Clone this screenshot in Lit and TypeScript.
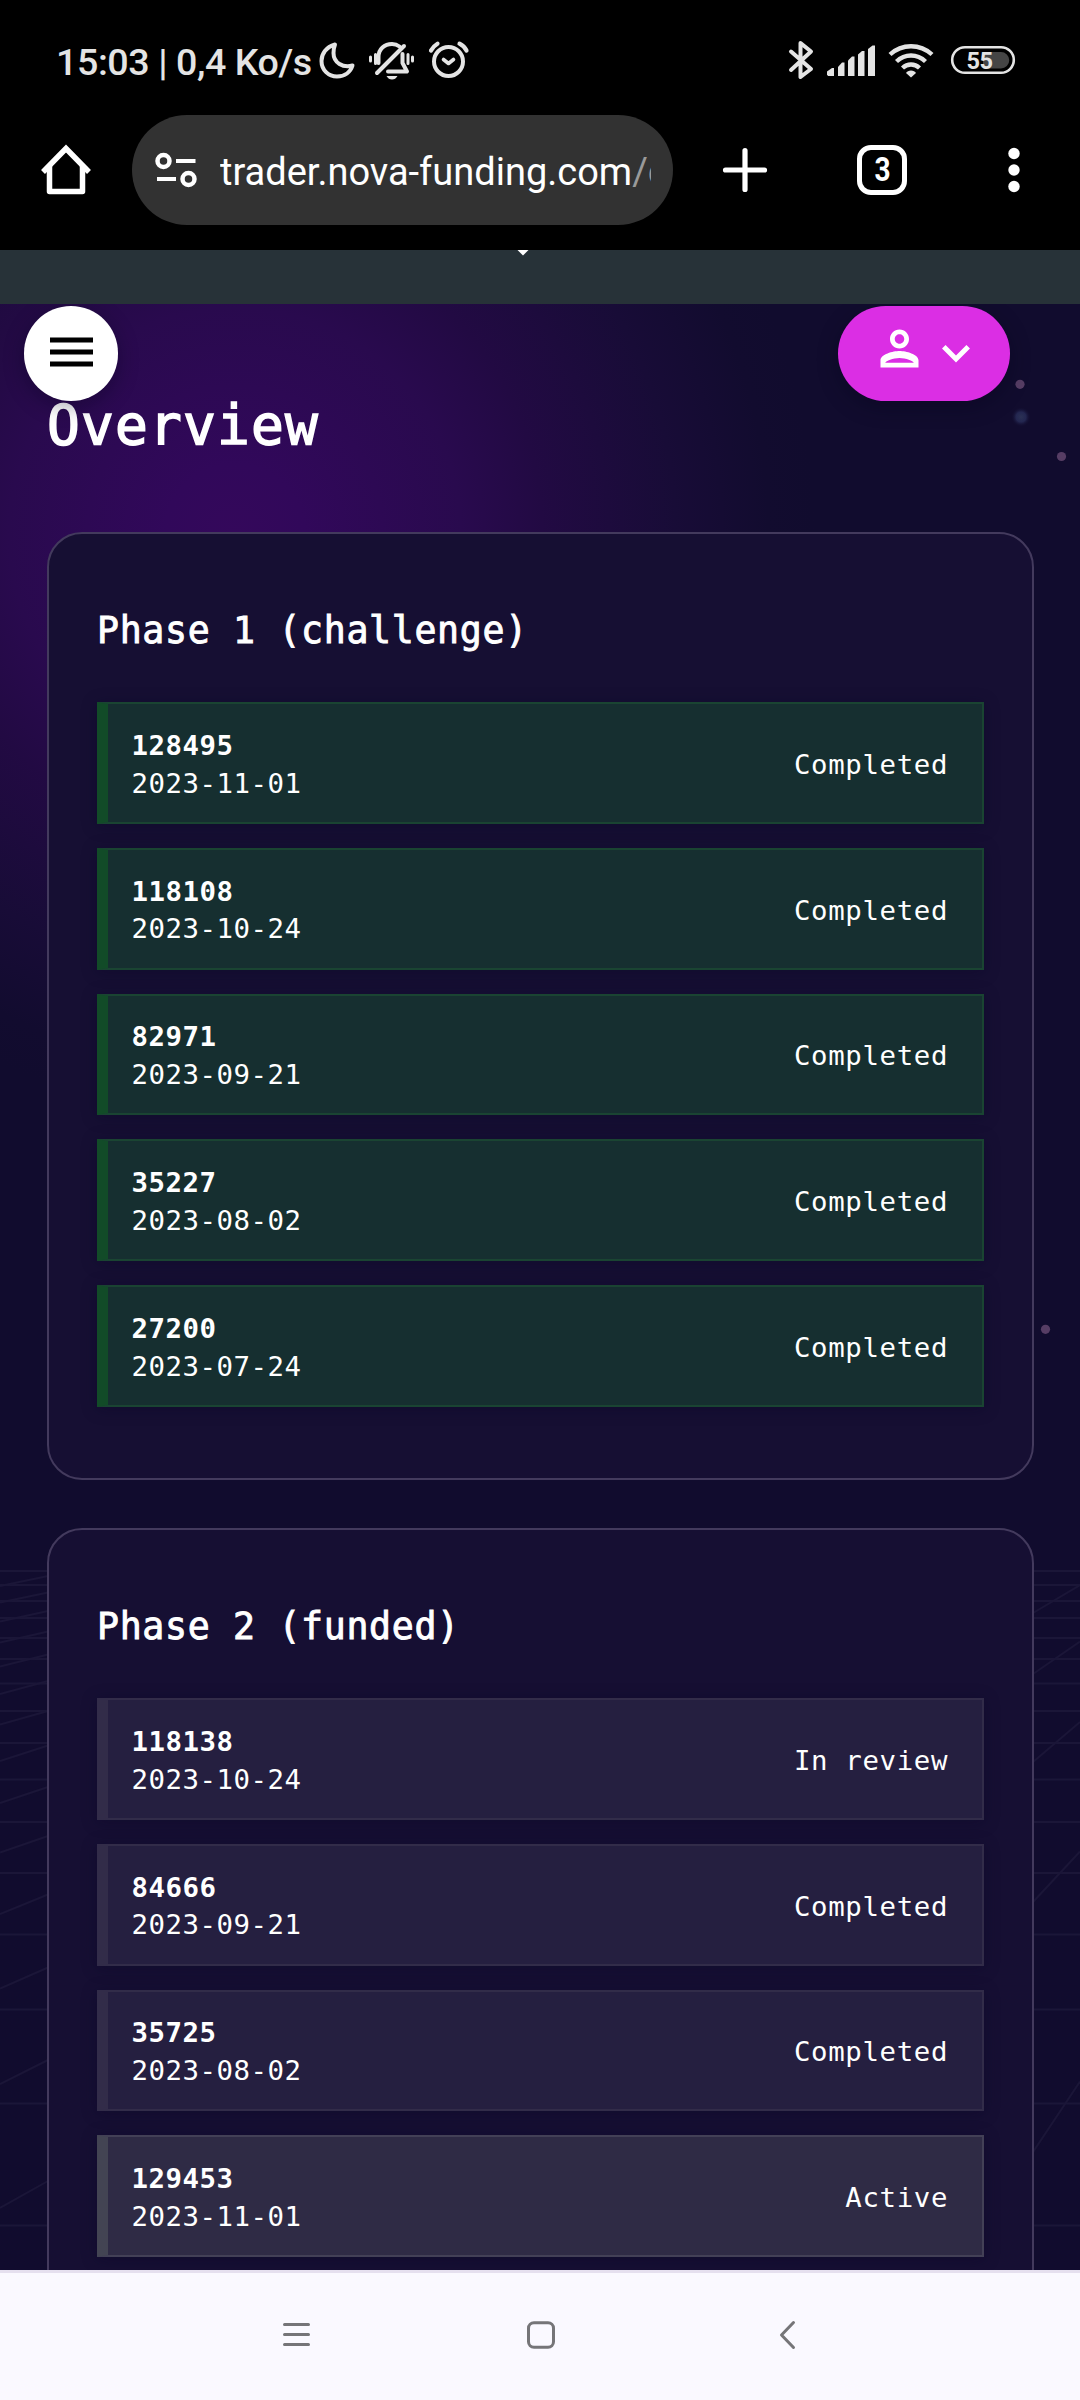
import { LitElement, html, css, svg } from "lit";
import { customElement, property } from "lit/decorators.js";

type Tone = "passed" | "muted" | "active";

interface Account {
  id: string;
  date: string;
  status: string;
  tone: Tone;
}

const account = (id: string, date: string, status: string, tone: Tone): Account => ({ id, date, status, tone });

const PHASE_ONE: Account[] = [
  account("128495", "2023-11-01", "Completed", "passed"),
  account("118108", "2023-10-24", "Completed", "passed"),
  account("82971", "2023-09-21", "Completed", "passed"),
  account("35227", "2023-08-02", "Completed", "passed"),
  account("27200", "2023-07-24", "Completed", "passed"),
];

const PHASE_TWO: Account[] = [
  account("118138", "2023-10-24", "In review", "muted"),
  account("84666", "2023-09-21", "Completed", "muted"),
  account("35725", "2023-08-02", "Completed", "muted"),
  account("129453", "2023-11-01", "Active", "active"),
];

@customElement("status-bar")
export class StatusBar extends LitElement {
  static styles = css`
    :host {
      display: flex;
      align-items: center;
      height: 120px;
      padding: 0 64px 0 56px;
      box-sizing: border-box;
      color: #e4e4e4;
      font: 500 37.6px/44px Roboto, sans-serif;
    }
    svg { display: block; flex: none; }
    .clock { width: 262px; white-space: nowrap; padding-top: 4px; letter-spacing: -0.420px; }
    .right { margin-left: auto; }
    .pct { font: 700 23.500px Roboto, sans-serif; fill: #e4e4e4; letter-spacing: -0.500px; }
  `;

  render() {
    return html`
      <span class="clock">15:03 | 0,4 Ko/s</span>
      <svg width="152" height="44" viewBox="318 38 152 44" fill="none" stroke="#e4e4e4" stroke-width="4" stroke-linejoin="round" stroke-linecap="round">
        <path d="M335 44.500C326 47 321.500 54 321.500 61C321.500 70 328.500 76.500 337 76.500C345 76.500 350.500 72 352.500 65.500C343 68 333.500 63 333.500 53C333.500 50 334 47 335 44.500Z" />
        <path d="M377 73L404 46" />
        <path d="M378.500 63V57C378.500 49 384.500 44 392 44C395 44 397.500 45 399.500 46.500" />
        <path d="M402.500 54V63L407 71.500H388" />
        <path d="M370.500 57V61M375.500 54.500V63.500M408 54.500V63.500M412.500 57V61" stroke-width="3" />
        <path d="M386.500 76H397.500C396 78.500 394.500 79.500 392 79.500S388 78.500 386.500 76Z" fill="#e4e4e4" stroke="none" />
        <circle cx="448.500" cy="61.500" r="14.500" />
        <path d="M431 50.500C432.500 47.500 434.500 45.500 437.500 43.700M466.500 50.500C465 47.500 463 45.500 459.500 43.700" stroke-width="4.200" />
        <path d="M443.500 59.500L448.500 63.500L453.500 59.500" stroke-width="3.600" />
      </svg>
      <svg class="right" width="228" height="44" viewBox="788 38 228 44">
        <path d="M791 51.500L811 69L800.500 77V43L811 51.500L791 70" fill="none" stroke="#e4e4e4" stroke-width="4" stroke-linejoin="round" stroke-linecap="round" />
        <g fill="#e4e4e4">
          <path d="M827 74.500V71.500L832 68H834V76H828Z" />
          <path d="M838 76V67L842 62.500H844.500V76Z" />
          <path d="M848 76V60.500L852 56.500H854.500V76Z" />
          <path d="M858 76V54.500L862 51H864.500V76Z" />
          <path d="M868 76V49L872.500 45.500H875V76Z" />
          <path d="M911 77.500L906 73C907.500 69.500 914.500 69.500 916 73Z" />
        </g>
        <path d="M902.500 68C907.500 63.300 914.500 63.300 919.500 68M896.500 61.500C905 53.500 917 53.500 925.500 61.500M890 54.500C902 43.500 920 43.500 932 54.500" fill="none" stroke="#e4e4e4" stroke-width="4.400" />
        <path d="M983 52H1001A8 8 0 0 1 1001 68.500H983Z" fill="#454545" />
        <rect x="952.200" y="47.200" width="61.600" height="25.600" rx="12.800" fill="none" stroke="#e4e4e4" stroke-width="2.600" />
        <text class="pct" x="966.500" y="69">55</text>
      </svg>
    `;
  }
}

@customElement("browser-bar")
export class BrowserBar extends LitElement {
  static styles = css`
    :host {
      display: flex;
      align-items: center;
      height: 110px;
      margin-top: -5px;
      padding: 0 59px 0 39px;
      box-sizing: border-box;
    }
    svg { display: block; flex: none; }
    .address {
      display: flex;
      align-items: center;
      width: 541px;
      height: 110px;
      margin-left: 39px;
      padding: 0 22px 0 21px;
      box-sizing: border-box;
      border-radius: 55px;
      background: #323232;
    }
    .url {
      flex: 1;
      margin-left: 22px;
      overflow: hidden;
      white-space: nowrap;
      color: #fff;
      font: 400 38px/48px Roboto, sans-serif;
      padding-top: 4px;
    }
    .path { color: #9a9a9a; }
    .plus { margin-left: 48px; }
    .tabs {
      display: flex;
      align-items: center;
      justify-content: center;
      width: 50px;
      height: 50px;
      margin-left: 88px;
      box-sizing: border-box;
      border: 5.500px solid #fff;
      border-radius: 14px;
      color: #fff;
      font: 700 33px/36px Roboto, sans-serif;
    }
    .count { transform: scaleX(0.85); }
    .more { margin-left: auto; }
  `;

  render() {
    return html`
      <svg width="54" height="54" viewBox="39 143 54 54" fill="none" stroke="#fff" stroke-width="5.500" stroke-linejoin="round">
        <path d="M49.500 166V191.500H82.500V166" />
        <path d="M43 172L66 148.500L89 172" stroke-linejoin="miter" />
      </svg>
      <div class="address">
        <svg width="45" height="38" viewBox="153 151 45 38" fill="none" stroke="#fff">
          <circle cx="163.500" cy="161" r="6" stroke-width="4.500" />
          <circle cx="188.500" cy="179" r="6" stroke-width="4.500" />
          <path d="M176 161H195.500M157 179H176" stroke-width="4.200" />
        </svg>
        <div class="url">trader.nova-funding.com<span class="path">/c</span></div>
      </div>
      <svg class="plus" width="48" height="48" viewBox="721 146 48 48" stroke="#fff" stroke-width="5.200" stroke-linecap="round">
        <path d="M725.500 170H764.500M745 150.500V189.500" />
      </svg>
      <div class="tabs"><span class="count">3</span></div>
      <svg class="more" width="14" height="50" viewBox="1007 145 14 50" fill="#fff">
        <circle cx="1014" cy="153.500" r="5.700" /><circle cx="1014" cy="170" r="5.700" /><circle cx="1014" cy="186.500" r="5.700" />
      </svg>
    `;
  }
}

@customElement("phase-card")
export class PhaseCard extends LitElement {
  @property() heading = "";
  @property({ attribute: false }) accounts: Account[] = [];

  static styles = css`
    :host {
      display: block;
      box-sizing: border-box;
      padding: 75.400px 48px 71px;
      border: 2px solid #433a5d;
      border-radius: 35px;
      background: #160f33;
      color: #fff;
      font-family: "DejaVu Sans Mono", monospace;
    }
    .heading {
      margin: 0 0 49.200px;
      font-size: 36.500px;
      line-height: 44px;
      font-weight: 400;
      letter-spacing: 0.700px;
      -webkit-text-stroke: 0.900px #fff;
    }
    .list { display: flex; flex-direction: column; gap: 24px; }
    .row {
      display: flex;
      justify-content: space-between;
      height: 121.700px;
      box-sizing: border-box;
      padding: 22.800px 34px 0 23.500px;
      border: 2px solid;
      border-left-width: 11px;
      box-shadow: 0 2px 14px rgba(8, 5, 38, 0.35);
      font-size: 27.400px;
      line-height: 37.800px;
      letter-spacing: 0.520px;
    }
    .passed { background: #162f30; border-color: #1a4432; border-left-color: #124b28; }
    .muted { background: #251f40; border-color: #322c49; }
    .active { background: #2f2b45; border-color: #434056; border-left-color: #434453; }
    .id { font-weight: 700; }
    .status { padding-top: 19px; letter-spacing: 0.620px; }
  `;

  render() {
    return html`
      <h2 class="heading">${this.heading}</h2>
      <div class="list">
        ${this.accounts.map(
          (a) => html`
            <div class="row ${a.tone}">
              <div>
                <div class="id">${a.id}</div>
                <div>${a.date}</div>
              </div>
              <div class="status">${a.status}</div>
            </div>
          `
        )}
      </div>
    `;
  }
}

/* Perspective floor: horizon rows, then rays as [x1, y1, x2, y2]. */
const FLOOR_ROWS = [1571, 1585, 1601, 1618, 1638, 1659, 1683.5, 1711, 1743, 1779.5, 1822, 1873, 1934.5, 2009.5, 2103.5, 2225.5];
const FLOOR_RAYS = [
  [0, 1586, 48, 1576], [0, 1602.5, 48, 1592.5], [0, 1621.5, 48, 1611], [0, 1642.5, 48, 1631.5], [0, 1666.5, 48, 1654.5],
  [0, 1694, 48, 1681], [0, 1724.5, 48, 1711], [0, 1761, 48, 1745.5], [0, 1803, 48, 1787], [0, 1852.5, 48, 1836],
  [0, 1914, 48, 1894.5], [0, 1988.5, 48, 1967.5], [0, 2084, 48, 2060], [0, 2208, 48, 2181],
  [1033, 1613, 1080, 1585], [1033, 1674, 1080, 1641.5], [1033, 1762, 1080, 1722], [1033, 1902, 1080, 1851.5], [1033, 2152, 1080, 2081.5],
];

@customElement("app-root")
export class AppRoot extends LitElement {
  static styles = css`
    :host {
      display: flex;
      flex-direction: column;
      width: 1080px;
      height: 2400px;
      overflow: hidden;
      background: #110c2e;
    }
    svg { display: block; flex: none; }
    .chrome { height: 250px; flex: none; background: #000; }
    .banner { height: 54px; flex: none; background: #273238; }
    .tip { margin-left: 517px; }
    .page {
      position: relative;
      height: 1966px;
      flex: none;
      box-sizing: border-box;
      padding: 89px 46px 0 47px;
      overflow: hidden;
      background: radial-gradient(circle 580px at 235px 230px, #34085b 0, #31085a 12%, #290a4e 39%, #220a43 53%, #180c37 76%, #120c2f 92%, #110c2e 100%);
    }
    .backdrop { position: absolute; left: 0; top: 0; }
    .title {
      position: relative;
      margin: 0 0 74.600px;
      color: #fff;
      font: 400 54.500px/64px "DejaVu Sans Mono", monospace;
      letter-spacing: 1.200px;
      -webkit-text-stroke: 1.500px #fff;
    }
    .cards { position: relative; display: flex; flex-direction: column; gap: 48px; }
    .menu, .profile {
      position: absolute;
      top: 2px;
      display: flex;
      align-items: center;
      height: 95px;
      box-sizing: border-box;
      border-radius: 47.500px;
      box-shadow: 0 6px 20px rgba(5, 2, 25, 0.35);
    }
    .menu { left: 24px; width: 94px; padding-bottom: 2px; justify-content: center; background: #fff; }
    .profile { left: 838px; width: 172px; padding: 0 40px 0 33px; justify-content: space-between; background: #db2ee4; }
    .person { margin-bottom: 11px; }
    .nav {
      display: flex;
      justify-content: center;
      height: 130px;
      flex: none;
      box-sizing: border-box;
      border-top: 3px solid #e5e0ef;
      padding: 45px 2px 0 0;
      background: #faf9ff;
    }
  `;

  render() {
    return html`
      <header class="chrome">
        <status-bar></status-bar>
        <browser-bar></browser-bar>
      </header>
      <div class="banner">
        <svg class="tip" width="12" height="6" viewBox="0 0 12 6"><path d="M0.500 0H11.500L6 5.500Z" fill="#fff" /></svg>
      </div>
      <main class="page">
        <svg class="backdrop" width="1080" height="1966" viewBox="0 304 1080 1966">
          <g fill="none" stroke="#1b1638" stroke-width="2">
            ${FLOOR_ROWS.map((y) => svg`<path d="M0 ${y}H1080" />`)}
            ${FLOOR_RAYS.map(([x1, y1, x2, y2]) => svg`<path d="M${x1} ${y1}L${x2} ${y2}" />`)}
          </g>
          <defs>
            <radialGradient id="glow">
              <stop offset="0" stop-color="#2b3154" />
              <stop offset="0.500" stop-color="#232650" />
              <stop offset="1" stop-color="#110c2e" stop-opacity="0" />
            </radialGradient>
          </defs>
          <circle cx="1021" cy="417" r="10" fill="url(#glow)" />
          <g fill="#563d64">
            <circle cx="1020" cy="384.300" r="4.600" />
            <circle cx="1061.500" cy="456.500" r="4.600" />
            <circle cx="1045.500" cy="1329.300" r="4.600" />
          </g>
        </svg>
        <h1 class="title">Overview</h1>
        <div class="cards">
          <phase-card heading="Phase 1 (challenge)" .accounts=${PHASE_ONE}></phase-card>
          <phase-card heading="Phase 2 (funded)" .accounts=${PHASE_TWO}></phase-card>
        </div>
        <div class="menu">
          <svg width="43" height="31" viewBox="0 0 43 31" stroke="#000" stroke-width="5"><path d="M0 3H43M0 15H43M0 27H43" /></svg>
        </div>
        <div class="profile">
          <svg class="person" width="57" height="57" viewBox="0 0 24 24" fill="#fff">
            <path d="M12 6c1.100 0 2 .9 2 2s-.9 2-2 2-2-.9-2-2 .9-2 2-2m0 10c2.700 0 5.800 1.290 6 2H6c.23-.72 3.310-2 6-2m0-12C9.790 4 8 5.790 8 8s1.790 4 4 4 4-1.790 4-4-1.790-4-4-4zm0 9c-2.670 0-8 1.340-8 4v3h16v-3c0-2.660-5.330-4-8-4z" />
          </svg>
          <svg width="28" height="18" viewBox="0 0 28 18" fill="none" stroke="#fff" stroke-width="5"><path d="M1.800 1.800L14 14L26.200 1.800" /></svg>
        </div>
      </main>
      <nav class="nav">
        <svg width="514" height="34" viewBox="282 2318 514 34" fill="none" stroke="#757578" stroke-width="3" stroke-linecap="round" stroke-linejoin="round">
          <path d="M284.500 2324.500H308.500M284.500 2334.500H308.500M284.500 2344.500H308.500" />
          <rect x="528.500" y="2322.700" width="25" height="24.600" rx="5.500" />
          <path d="M793.500 2322.500L781.500 2335L793.500 2347.500" />
        </svg>
      </nav>
    `;
  }
}
